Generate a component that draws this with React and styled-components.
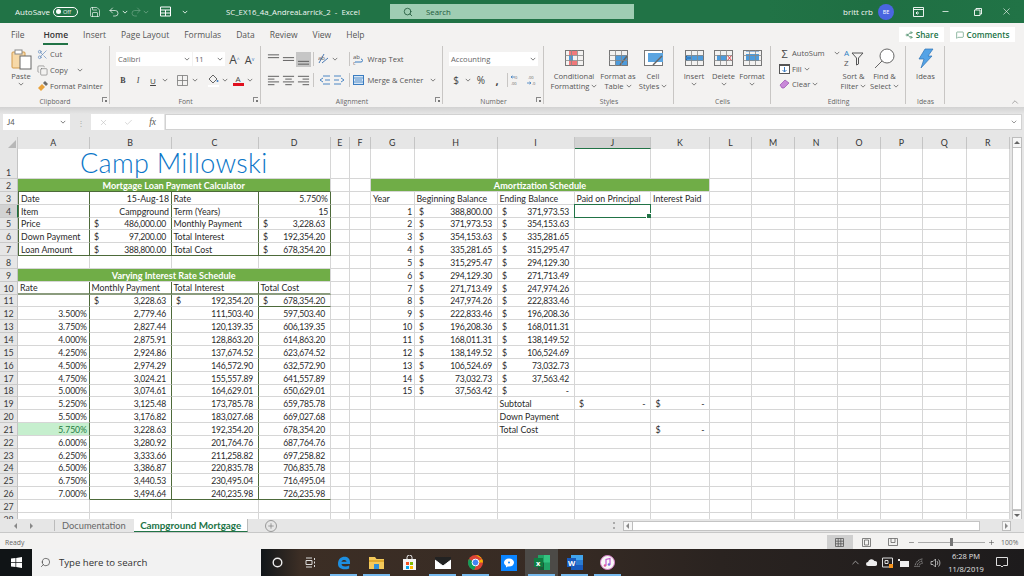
import React from 'react';
import styled, { createGlobalStyle } from 'styled-components';
import { Save, Undo2, Redo2, Search, Scissors, Copy, ChevronDown, ChevronUp, Share2, MessageSquare, X, Check, Plus, Minus } from 'lucide-react';

const Global = createGlobalStyle`
  html, body { margin: 0; padding: 0; background: #e6e6e6; }
  * { box-sizing: border-box; }
  #root { width: 1024px; height: 576px; overflow: hidden; }
`;

const UI = `"Open Sans", "Noto Sans", sans-serif`;
const Window = styled.div`
  width: 1024px; height: 576px; overflow: hidden; display: flex; flex-direction: column;
  font-family: ${UI}; background: #e6e6e6; color: #444;
`;

/* ---------- title bar ---------- */
const TitleBar = styled.div`
  height: 23px; flex: none; background: linear-gradient(90deg, #217346 0 75%, #1f6f43 85%, #217346); color: #f1f7f3;
  display: flex; align-items: center; font-size: 8px; position: relative;
`;
const AutoSave = styled.span` margin-left: 15px; width: 38px; `;
const Toggle = styled.span`
  width: 25px; height: 10px; border: 1px solid #fff; border-radius: 6px; display: flex; align-items: center;
  padding-left: 2px; gap: 2px; font-size: 5.6px; margin-right: 10px;
  &::before { content: ''; width: 5px; height: 5px; border-radius: 50%; background: #fff; }
`;
const QuickIcon = styled.span`
  display: flex; align-items: center; justify-content: center; width: ${p => p.$w || 12}px; margin-right: ${p => p.$mr || 0}px;
  opacity: ${p => p.$dim ? 0.35 : 1};
`;
const DocTitle = styled.span` margin-left: 36px; width: 164px; white-space: nowrap; font-size: 7.8px; `;
const SearchBox = styled.div`
  width: 244px; height: 15px; background: #9fcdb3; color: #21593b; display: flex; align-items: center;
  padding-left: 13px; gap: 13px; font-size: 7.8px;
`;
const UserName = styled.span` margin-left: 209px; width: 35px; white-space: nowrap; font-size: 8px; `;
const Avatar = styled.span`
  width: 16px; height: 16px; border-radius: 50%; background: #4a66e0; color: #fff; font-size: 5.5px;
  display: flex; align-items: center; justify-content: center; margin-right: 18px;
`;
const WinBtn = styled.span` width: ${p => p.$w}px; margin-right: ${p => p.$mr || 0}px; display: flex; justify-content: center; align-items: center; `;

/* ---------- tab row ---------- */
const TabRow = styled.div`
  height: 23px; flex: none; background: #f3f2f1; display: flex; align-items: center; padding-left: 11px;
  gap: 15px; font-size: 8.5px; color: #555;
`;
const MenuTab = styled.span`
  height: 23px; display: flex; align-items: center; position: relative; white-space: nowrap; margin-right: ${p => p.$mr || 0}px;
  ${p => p.$active && `color: #333; font-weight: 600;
    &::after { content: ''; position: absolute; left: 0; right: 0; bottom: 1px; height: 2px; background: #217346; }`}
`;
const TabActions = styled.div` margin-left: auto; display: flex; gap: 6px; margin-right: 9px; `;
const ActionBtn = styled.span`
  height: 15px; width: ${p => p.$w}px; background: #fff; color: #217346; font-weight: 600; font-size: 8.2px;
  display: flex; align-items: center; justify-content: center; gap: 3px;
`;

/* ---------- ribbon ---------- */
const Ribbon = styled.div`
  height: 61px; flex: none; background: #f3f2f1; display: flex; position: relative; font-size: 7.6px; color: #555;
`;
const GroupBox = styled.div`
  width: ${p => p.$w}px; flex: none; display: flex; flex-direction: column; position: relative;
  &::after { content: ''; position: absolute; right: 0; top: 0; bottom: 3px; width: 1px; background: #c8c6c4; }
`;
const GroupBody = styled.div` height: 49px; flex: none; display: flex; padding-left: ${p => p.$pl || 0}px; `;
const GroupLabel = styled.div` text-align: center; font-size: 6.8px; color: #666; line-height: 10px; padding-top: 2px; `;
const Launcher = styled.span`
  position: absolute; right: 3px; bottom: 5px; width: 5px; height: 5px; border-left: 1px solid #888; border-top: 1px solid #888;
  &::after { content: ''; position: absolute; right: 0; bottom: 0; width: 2px; height: 2px; background: #777; }
`;
const PasteCol = styled.div`
  width: 32px; margin-left: 5px; display: flex; flex-direction: column; align-items: center; padding-top: 3px; font-size: 7.6px; line-height: 10px;
`;
const PasteLabel = styled.span` margin-top: 1px; `;
const SmallCol = styled.div`
  width: ${p => p.$w ? p.$w + 'px' : 'auto'}; display: flex; flex-direction: column; padding-top: ${p => p.$pt ?? 1}px; gap: ${p => p.$gap ?? 2}px; white-space: nowrap;
`;
const SmallItem = styled.div` height: 14px; display: flex; align-items: center; gap: 2px; `;
const RowStack = styled.div` display: flex; flex-direction: column; padding-top: 6px; gap: 7px; `;
const ToolRow = styled.div` height: 14px; display: flex; align-items: center; `;
const Combo = styled.div`
  width: ${p => p.$w}px; height: 14px; background: #fff; display: flex; align-items: center; justify-content: space-between;
  padding: 0 2px; font-size: 7.6px; color: #666; margin-right: ${p => p.$mr || 0}px;
`;
const Tool = styled.span`
  width: ${p => p.$w || 14}px; height: 15px; flex: none; display: flex; align-items: center; justify-content: center;
  margin-left: ${p => p.$ml || 0}px; flex-direction: ${p => p.$stack ? 'column' : 'row'}; line-height: ${p => p.$stack ? '9px' : 'normal'};
  font-size: ${p => p.$fs || 8}px; color: #444; font-weight: ${p => p.$bold ? 700 : 400};
  font-style: ${p => p.$it ? 'italic' : 'normal'}; text-decoration: ${p => p.$u ? 'underline' : 'none'};
  background: ${p => p.$on ? '#c6c6c6' : 'transparent'}; font-family: ${p => p.$serif ? '"Liberation Serif", serif' : 'inherit'};
`;
const UpTick = styled.sup` font-size: 5px; color: #3a7cc0; `;
const ColorBar = styled.span` width: 11px; height: 2.5px; background: #e0101e; `;
const ToolText = styled.span`
  font-size: 7.6px; white-space: nowrap; margin-left: ${p => p.$ml || 0}px; width: ${p => p.$w ? p.$w + 'px' : 'auto'}; flex: none;
`;
const VSep = styled.span` width: 1px; height: 14px; background: #c8c6c4; flex: none; margin-left: ${p => p.$ml || 0}px; margin-right: ${p => p.$mr || 0}px; `;
const BigBtn = styled.div`
  width: ${p => p.$w}px; flex: none; display: flex; flex-direction: column; align-items: center; padding-top: 2px;
  text-align: center; line-height: 10.6px; font-size: 7.6px; white-space: nowrap;
`;
const BigIcon = styled.div` height: 20px; flex: none; display: flex; align-items: center; justify-content: center; margin-bottom: 2.7px; `;
const Caret = styled.span` position: absolute; right: 4px; bottom: 0; color: #666; display: flex; `;
const ChevSvg = styled.svg` flex: none; margin-left: ${p => p.$ml || 0}px; `;

const Chev = ({ s = 6, c = '#666', ml = 0 }) => (
  <ChevSvg $ml={ml} width={s} height={s} viewBox="0 0 8 8"><path d="M1 2.5 4 5.5 7 2.5" fill="none" stroke={c} strokeWidth="1.1" /></ChevSvg>
);
const Lines = ({ kind }) => {
  const rows = {
    left: [[1, 13], [1, 8], [1, 13], [1, 8]],
    center: [[1, 13], [3.500, 10.500], [1, 13], [3.500, 10.500]],
    right: [[1, 13], [6, 13], [1, 13], [6, 13]],
    top: [[1, 13], [1, 13]],
    mid: [[1, 13], [1, 13]],
    bot: [[1, 13], [1, 13]],
  }[kind];
  const y0 = { top: 2, mid: 5, bot: 9 }[kind] ?? 2.5;
  return (
    <svg width="13" height="13" viewBox="0 0 14 14">
      {rows.map(([a, b], i) => <line key={i} x1={a} x2={b} y1={y0 + i * 3} y2={y0 + i * 3} stroke="#555" strokeWidth="1" />)}
    </svg>
  );
};
const GridIcon = ({ children }) => (
  <svg width="19" height="16" viewBox="0 0 19 16">
    {children}
    <rect x=".5" y=".5" width="18" height="15" fill="none" stroke="#777" />
    {[6.5, 12.5].map(x => <line key={x} x1={x} x2={x} y1="0" y2="16" stroke="#888" strokeWidth=".8" />)}
    {[5.5, 10.5].map(y => <line key={y} y1={y} y2={y} x1="0" x2="19" stroke="#888" strokeWidth=".8" />)}
  </svg>
);

const Clipboard = () => (
  <GroupBox $w={110}>
    <GroupBody>
      <PasteCol>
        <svg width="21" height="21" viewBox="0 0 21 21">
          <rect x="1" y="3" width="13" height="16" rx="1" fill="#f7d9a8" stroke="#d39a4a" />
          <rect x="4" y="1" width="7" height="4" fill="#fff" stroke="#888" />
          <rect x="9" y="7" width="11" height="13" fill="#fff" stroke="#666" />
        </svg>
        <PasteLabel>Paste</PasteLabel>
        <Chev />
      </PasteCol>
      <SmallCol>
        <SmallItem><Scissors size={11} color="#4a7ab5" strokeWidth={1.3} /><span>Cut</span></SmallItem>
        <SmallItem><Copy size={11} color="#666" strokeWidth={1.2} /><span>Copy</span><Chev ml={7} /></SmallItem>
        <SmallItem>
          <svg width="11" height="11" viewBox="0 0 11 11"><path d="M1 7 5 3 8 6 4 10Z" fill="#e9a23b" /><path d="M6 2 8 0 11 3 9 5Z" fill="#6b6b6b" /></svg>
          <span>Format Painter</span>
        </SmallItem>
      </SmallCol>
    </GroupBody>
    <GroupLabel>Clipboard</GroupLabel>
    <Launcher />
  </GroupBox>
);

const Font = () => (
  <GroupBox $w={151}>
    <GroupBody $pl={6}>
      <RowStack>
        <ToolRow>
          <Combo $w={76} $mr={1}>Calibri <Chev /></Combo>
          <Combo $w={32} $mr={2}>11 <Chev /></Combo>
          <Tool $w={15} $fs={12}>A<UpTick>^</UpTick></Tool>
          <Tool $w={15} $fs={11}>A<UpTick>v</UpTick></Tool>
        </ToolRow>
        <ToolRow>
          <Tool $w={14} $bold $serif>B</Tool>
          <Tool $w={16} $it $serif>I</Tool>
          <Tool $w={14} $u>U</Tool>
          <Chev ml={2} />
          <Tool $w={11} $ml={9}><svg width="11" height="11" viewBox="0 0 11 11"><path d="M.5.5h10v10H.5ZM5.500.5v10M.5 5.500h10" fill="none" stroke="#777" strokeWidth=".8" /></svg></Tool>
          <Chev ml={4} />
          <Tool $w={14} $ml={8}><svg width="11" height="13" viewBox="0 0 11 13"><path d="M5 1 9 5 5 9 1 5Z" fill="none" stroke="#666" /><circle cx="9.5" cy="7" r="1" fill="#3a7cc0" /><rect x="0" y="11" width="11" height="2" fill="#fff" /></svg></Tool>
          <Chev ml={2} />
          <Tool $w={14} $ml={3} $stack>A<ColorBar /></Tool>
          <Chev ml={2} />
        </ToolRow>
      </RowStack>
    </GroupBody>
    <GroupLabel>Font</GroupLabel>
    <Launcher />
  </GroupBox>
);

const Alignment = () => (
  <GroupBox $w={182}>
    <GroupBody $pl={4.5}>
      <RowStack>
        <ToolRow>
          <Tool $w={15}><Lines kind="top" /></Tool>
          <Tool $w={15}><Lines kind="mid" /></Tool>
          <Tool $w={15} $on><Lines kind="bot" /></Tool>
          <VSep $ml={2} $mr={3} />
          <Tool $w={15}><svg width="12" height="12" viewBox="0 0 12 12"><path d="M1 10 6 1M4 10 10 5" stroke="#4a7ab5" fill="none" /><text x="0" y="7" fontSize="6" fill="#666">ab</text></svg></Tool>
          <Chev />
          <VSep $ml={11} />
          <Tool $w={14} $ml={2}><svg width="11" height="12" viewBox="0 0 11 12"><text x="0" y="5.5" fontSize="6" fill="#555">ab</text><path d="M2 9h6a1.5 1.5 0 0 0 0-3" stroke="#3a7cc0" fill="none" /><text x="0" y="12" fontSize="5" fill="#555">c</text></svg></Tool>
          <ToolText $ml={2}>Wrap Text</ToolText>
        </ToolRow>
        <ToolRow>
          <Tool $w={15}><Lines kind="left" /></Tool>
          <Tool $w={15}><Lines kind="center" /></Tool>
          <Tool $w={15}><Lines kind="right" /></Tool>
          <VSep $ml={2} $mr={3} />
          <Tool $w={15}><svg width="11" height="10" viewBox="0 0 11 10"><path d="M4 1h7M4 9h7M6 5h5M4 3 1 5 4 7" stroke="#3a7cc0" fill="none" strokeWidth=".9" /></svg></Tool>
          <Tool $w={15}><svg width="11" height="10" viewBox="0 0 11 10"><path d="M0 1h7M0 9h7M0 5h5M7 3 10 5 7 7" stroke="#3a7cc0" fill="none" strokeWidth=".9" /></svg></Tool>
          <VSep $ml={2} />
          <Tool $w={14} $ml={2}><svg width="11" height="10" viewBox="0 0 11 10"><rect x=".5" y=".5" width="10" height="9" fill="#d6e6f5" stroke="#3a7cc0" /><path d="M2 5h7M.5 3h10M.5 7h10" stroke="#3a7cc0" strokeWidth=".8" /></svg></Tool>
          <ToolText $ml={2} $w={62}>Merge &amp; Center</ToolText>
          <Chev />
        </ToolRow>
      </RowStack>
    </GroupBody>
    <GroupLabel>Alignment</GroupLabel>
    <Launcher />
  </GroupBox>
);

const NumberGroup = () => (
  <GroupBox $w={101}>
    <GroupBody $pl={6}>
      <RowStack>
        <ToolRow><Combo $w={89}>Accounting <Chev /></Combo></ToolRow>
        <ToolRow>
          <Tool $w={14} $fs={10}>$</Tool>
          <Chev ml={2} />
          <Tool $w={14} $ml={3} $fs={10}>%</Tool>
          <Tool $w={14} $ml={2} $fs={11} $bold>,</Tool>
          <VSep $ml={3} />
          <Tool $w={15}><svg width="11" height="10" viewBox="0 0 11 10"><path d="M5 2H1M2.500.8 1 2l1.500 1.2" stroke="#3a7cc0" fill="none" strokeWidth=".8" /><text x="4" y="4" fontSize="4" fill="#666">.0</text><text x="1" y="9.5" fontSize="4" fill="#666">.00</text></svg></Tool>
          <Tool $w={15} $ml={1}><svg width="11" height="10" viewBox="0 0 11 10"><path d="M1 8h4M3.500 6.800 5 8 3.500 9.200" stroke="#3a7cc0" fill="none" strokeWidth=".8" /><text x="2" y="4" fontSize="4" fill="#666">.00</text><text x="6" y="9.5" fontSize="4" fill="#666">.0</text></svg></Tool>
        </ToolRow>
      </RowStack>
    </GroupBody>
    <GroupLabel>Number</GroupLabel>
    <Launcher />
  </GroupBox>
);

const Styles = () => (
  <GroupBox $w={130}>
    <GroupBody $pl={7}>
      <BigBtn $w={46}>
        <BigIcon><GridIcon><rect x="4" y="0" width="8" height="5" fill="#f0787a" /><rect x="4" y="11" width="8" height="5" fill="#f0787a" /><rect x="4" y="5" width="4" height="6" fill="#4d9bdc" /></GridIcon></BigIcon>
        Conditional<span>Formatting <Chev /></span>
      </BigBtn>
      <BigBtn $w={42}>
        <BigIcon><GridIcon><rect x="6" y="5" width="13" height="11" fill="#4d9bdc" /><path d="M11 15 18 6" stroke="#666" strokeWidth="1.5" /></GridIcon></BigIcon>
        Format as<span>Table <Chev /></span>
      </BigBtn>
      <BigBtn $w={28}>
        <BigIcon><svg width="19" height="16" viewBox="0 0 19 16"><rect x=".5" y=".5" width="18" height="15" fill="#fff" stroke="#777" /><rect x="4" y="3" width="15" height="9" fill="#5aa4e0" /><path d="M9 15 18 6" stroke="#666" strokeWidth="1.5" /></svg></BigIcon>
        Cell<span>Styles <Chev /></span>
      </BigBtn>
    </GroupBody>
    <GroupLabel>Styles</GroupLabel>
  </GroupBox>
);

const CellsGroup = () => (
  <GroupBox $w={97}>
    <GroupBody $pl={5}>
      <BigBtn $w={30}>
        <BigIcon><GridIcon><rect x="0" y="5" width="19" height="6" fill="#4d9bdc" /><path d="M6 8H0M2.500 5.500 0 8l2.500 2.500" stroke="#1c66b0" fill="none" /></GridIcon></BigIcon>
        Insert<Chev />
      </BigBtn>
      <BigBtn $w={29}>
        <BigIcon><GridIcon><rect x="3" y="5" width="10" height="6" fill="#4d9bdc" /><path d="M13 5 18 11M18 5 13 11" stroke="#e0404a" /></GridIcon></BigIcon>
        Delete<Chev />
      </BigBtn>
      <BigBtn $w={28}>
        <BigIcon><GridIcon><rect x="3" y="4" width="13" height="7" fill="#4d9bdc" /><path d="M3 1h13" stroke="#3a7cc0" /></GridIcon></BigIcon>
        Format<Chev />
      </BigBtn>
    </GroupBody>
    <GroupLabel>Cells</GroupLabel>
  </GroupBox>
);

const Editing = () => (
  <GroupBox $w={135}>
    <GroupBody $pl={8}>
      <SmallCol $w={59} $pt={0} $gap={1.5}>
        <SmallItem><Tool $w={11} $fs={11}>Σ</Tool><ToolText $w={40}>AutoSum</ToolText><Chev /></SmallItem>
        <SmallItem><Tool $w={11}><svg width="11" height="10" viewBox="0 0 11 10"><rect x=".5" y=".5" width="10" height="9" fill="#fff" stroke="#555" /><rect x="0" y="0" width="11" height="2" fill="#555" /><path d="M5.500 3v5M3.500 6 5.500 8 7.500 6" stroke="#3a7cc0" fill="none" /></svg></Tool><ToolText>Fill</ToolText><Chev /></SmallItem>
        <SmallItem><Tool $w={11}><svg width="11" height="10" viewBox="0 0 11 10"><path d="M1 6 6 1 10 4 5 9H3Z" fill="#c888d8" stroke="#9a4fb0" strokeWidth=".7" /></svg></Tool><ToolText>Clear</ToolText><Chev /></SmallItem>
      </SmallCol>
      <BigBtn $w={31}>
        <BigIcon>
          <svg width="22" height="20" viewBox="0 0 22 20"><text x="1" y="8" fontSize="8" fill="#2f7fc4">A</text><text x="1" y="18" fontSize="8" fill="#555">Z</text><path d="M9 5h11l-4.500 5v6l-2 1v-7Z" fill="none" stroke="#555" /></svg>
        </BigIcon>
        Sort &amp;<span>Filter <Chev /></span>
      </BigBtn>
      <BigBtn $w={31}>
        <BigIcon>
          <svg width="22" height="21" viewBox="0 0 22 21"><circle cx="13" cy="8" r="7" fill="#fff" stroke="#666" /><path d="M8 13 1 20" stroke="#666" /></svg>
        </BigIcon>
        Find &amp;<span>Select <Chev /></span>
      </BigBtn>
    </GroupBody>
    <GroupLabel>Editing</GroupLabel>
  </GroupBox>
);

const Ideas = () => (
  <GroupBox $w={39}>
    <GroupBody>
      <BigBtn $w={39}>
        <BigIcon><svg width="16" height="21" viewBox="0 0 16 21"><path d="M7 1h8L10 8h4L3 20 6 11H1Z" fill="#54a3e6" stroke="#2f74b5" strokeWidth=".7" /></svg></BigIcon>
        Ideas
      </BigBtn>
    </GroupBody>
    <GroupLabel>Ideas</GroupLabel>
  </GroupBox>
);

/* ---------- formula bar ---------- */
const RibbonShade = styled.div` height: 7px; flex: none; background: linear-gradient(#d2d2d2, #e6e6e6); `;
const FormulaBar = styled.div` height: 16px; flex: none; display: flex; align-items: stretch; padding-left: 3px; `;
const NameBox = styled.div`
  width: 67px; background: #fff; display: flex; align-items: center; justify-content: space-between; padding: 0 4px;
  font-size: 7.6px; color: #555; font-family: "Lato", sans-serif;
`;
const Grip = styled.div` width: 21px; color: #aaa; display: flex; align-items: center; justify-content: center; font-size: 8px; `;
const FxBox = styled.div` width: 73px; background: #fff; display: flex; align-items: center; justify-content: space-between; padding: 0 8px; margin-right: 1px; `;
const Fx = styled.span` font-family: "Liberation Serif", serif; font-style: italic; font-size: 9.5px; color: #555; `;
const FormulaInput = styled.div`
  width: 857px; background: #fff; border: 1px solid #d2d2d2; display: flex; align-items: center; justify-content: flex-end; padding-right: 3px;
`;
const BarGap = styled.div` height: 7px; flex: none; `;

/* ---------- sheet ---------- */
const SheetArea = styled.div` height: 382px; flex: none; display: flex; overflow: hidden; `;
const CELL = `"Lato", "Carlito", sans-serif`;
const COLS = [['A', 71.5], ['B', 82], ['C', 87], ['D', 72], ['E', 19.5], ['F', 21], ['G', 43.5], ['H', 83], ['I', 77], ['J', 76.5], ['K', 59], ['L', 42], ['M', 43], ['N', 43], ['O', 43], ['P', 42], ['Q', 43.5], ['R', 43.5]];
const Grid = styled.div`
  width: 1010px; flex: none; display: grid; background: #fff;
  grid-template-columns: 18px ${COLS.map(c => c[1] + 'px').join(' ')};
  grid-template-rows: 12px 30px repeat(27, 12.85px);
  font-family: ${CELL}; font-size: 8.8px; color: #2a2a2a;
`;
const Corner = styled.div`
  background: #e6e6e6; border-right: 1px solid #c8c8c8; position: relative;
  &::after { content: ''; position: absolute; right: 1px; bottom: 1px; border-style: solid; border-width: 0 0 8px 8px; border-color: transparent transparent #b7b7b7 transparent; }
`;
const ColHead = styled.div`
  background: ${p => p.$on ? '#d2d2d2' : '#e6e6e6'}; border-right: 1px solid #c4c4c4; color: #333;
  display: flex; align-items: center; justify-content: center; font-size: 8.8px; line-height: 12px;
  border-bottom: ${p => p.$on ? '1px solid #217346' : 'none'};
`;
const RowHead = styled.div`
  background: ${p => p.$on ? '#d2d2d2' : '#e6e6e6'}; color: #3a3a3a; border-bottom: 1px solid #c9c9c9;
  border-right: 1px solid ${p => p.$on ? '#217346' : '#c4c4c4'};
  display: flex; align-items: flex-end; justify-content: center; font-size: 8.8px; line-height: 10px;
`;
const Cell = styled.div`
  grid-column: span ${p => p.$span || 1}; display: flex; align-items: flex-end; white-space: nowrap; position: relative;
  line-height: 10px; min-width: 0;
  justify-content: ${p => p.$a === 'r' ? 'flex-end' : p.$a === 'c' ? 'center' : p.$a === 'acc' ? 'space-between' : 'flex-start'};
  padding: ${p => p.$a === 'acc' ? '0 4.5px' : p.$a === 'r' ? '0 1.5px 0 0' : p.$a === 'l' ? '0 0 0 2px' : '0'};
  border-right: 1px solid ${p => p.$right ? '#4d6a3a' : '#d6d6d6'};
  border-bottom: ${p => p.$bottom === 'mid' ? '2px solid #8b9c7e' : p.$bottom ? '1px solid #4d6a3a' : '1px solid #d6d6d6'};
  border-left: ${p => p.$left ? '1px solid #4d6a3a' : 'none'};
  background: ${p => p.$bg || 'transparent'};
  color: ${p => p.$fg || 'inherit'};
  font-weight: ${p => p.$bold ? 700 : 400};
  font-size: ${p => p.$bold ? '9.1px' : 'inherit'};
`;
const TitleText = styled.span`
  font-family: "Lato", sans-serif; font-weight: 300; font-size: 27px; line-height: 30px; color: #0b76c8; letter-spacing: .3px;
`;
const Selection = styled.span`
  position: absolute; inset: -1px; border: 1.5px solid #217346; pointer-events: none;
  &::after { content: ''; position: absolute; right: -2px; bottom: -2px; width: 4px; height: 4px; background: #217346; border: .5px solid #fff; }
`;
const VScroll = styled.div` width: 14px; flex: none; background: #e6e6e6; display: flex; flex-direction: column; padding: 0 2px; align-items: stretch; `;
const ScrollBtn = styled.div`
  height: 11px; flex: none; background: #f6f6f6; border: 1px solid #bdbdbd; display: flex; align-items: center; justify-content: center; color: #555;
`;
const Thumb = styled.div` height: 362px; flex: none; background: #fff; border: 1px solid #c4c4c4; border-top: none; `;
const Tri = styled.span`
  width: 0; height: 0; border-style: solid;
  border-width: ${p => ({ u: '0 3px 3px 3px', d: '3px 3px 0 3px', l: '3px 3px 3px 0', r: '3px 0 3px 3px' }[p.$d])};
  border-color: ${p => ({ u: 'transparent transparent #666 transparent', d: '#666 transparent transparent transparent', l: 'transparent #888 transparent transparent', r: 'transparent transparent transparent #888' }[p.$d])};
`;

const L = t => ({ t, a: 'l' });
const R = t => ({ t, a: 'r' });
const A = t => ({ t, a: 'acc' });

const rates = [
  ['3.500%', '2,779.46', '111,503.40', '597,503.40'], ['3.750%', '2,827.44', '120,139.35', '606,139.35'],
  ['4.000%', '2,875.91', '128,863.20', '614,863.20'], ['4.250%', '2,924.86', '137,674.52', '623,674.52'],
  ['4.500%', '2,974.29', '146,572.90', '632,572.90'], ['4.750%', '3,024.21', '155,557.89', '641,557.89'],
  ['5.000%', '3,074.61', '164,629.01', '650,629.01'], ['5.250%', '3,125.48', '173,785.78', '659,785.78'],
  ['5.500%', '3,176.82', '183,027.68', '669,027.68'], ['5.750%', '3,228.63', '192,354.20', '678,354.20'],
  ['6.000%', '3,280.92', '201,764.76', '687,764.76'], ['6.250%', '3,333.66', '211,258.82', '697,258.82'],
  ['6.500%', '3,386.87', '220,835.78', '706,835.78'], ['6.750%', '3,440.53', '230,495.04', '716,495.04'],
  ['7.000%', '3,494.64', '240,235.98', '726,235.98'],
];
const amort = [
  ['388,800.00', '371,973.53'], ['371,973.53', '354,153.63'], ['354,153.63', '335,281.65'], ['335,281.65', '315,295.47'],
  ['315,295.47', '294,129.30'], ['294,129.30', '271,713.49'], ['271,713.49', '247,974.26'], ['247,974.26', '222,833.46'],
  ['222,833.46', '196,208.36'], ['196,208.36', '168,011.31'], ['168,011.31', '138,149.52'], ['138,149.52', '106,524.69'],
  ['106,524.69', '73,032.73'], ['73,032.73', '37,563.42'], ['37,563.42', '-'],
];

const DATA = {
  1: { A: { span: 4, title: 'Camp Millowski', a: 'c' } },
  2: { A: { span: 4, t: 'Mortgage Loan Payment Calculator', a: 'c', band: true }, G: { span: 5, t: 'Amortization Schedule', a: 'c', band: true } },
  3: { A: L('Date'), B: R('15-Aug-18'), C: L('Rate'), D: R('5.750%'), G: L('Year'), H: L('Beginning Balance'), I: L('Ending Balance'), J: L('Paid on Principal'), K: L('Interest Paid') },
  4: { A: L('Item'), B: R('Campground'), C: L('Term (Years)'), D: R('15') },
  5: { A: L('Price'), B: A('486,000.00'), C: L('Monthly Payment'), D: A('3,228.63') },
  6: { A: L('Down Payment'), B: A('97,200.00'), C: L('Total Interest'), D: A('192,354.20') },
  7: { A: L('Loan Amount'), B: A('388,800.00'), C: L('Total Cost'), D: A('678,354.20') },
  9: { A: { span: 4, t: 'Varying Interest Rate Schedule', a: 'c', band: true } },
  10: { A: L('Rate'), B: L('Monthly Payment'), C: L('Total Interest'), D: L('Total Cost') },
  11: { B: A('3,228.63'), C: A('192,354.20'), D: A('678,354.20') },
};
rates.forEach((r, i) => {
  const row = 12 + i;
  DATA[row] = { A: R(r[0]), B: { t: r[1], a: 'r', pad: true }, C: { t: r[2], a: 'r', pad: true }, D: { t: r[3], a: 'r', pad: true } };
});
DATA[21].A.bg = '#c6efce';
DATA[21].A.fg = '#1f7a42';
amort.forEach((r, i) => {
  const row = 4 + i;
  DATA[row] = { ...DATA[row], G: R(String(i + 1)), H: A(r[0]), I: A(r[1]) };
});
DATA[19] = { ...DATA[19], I: L('Subtotal'), J: A('-'), K: A('-') };
DATA[20] = { ...DATA[20], I: L('Down Payment') };
DATA[21] = { ...DATA[21], I: L('Total Cost'), K: A('-') };

const rightDark = (c, r) =>
  (r >= 3 && r <= 7 && 'ABCD'.includes(c)) || (r >= 10 && r <= 26 && 'ABC'.includes(c));
const bottomDark = (c, r) => {
  if (!'ABCD'.includes(c)) return false;
  if (r === 2 || r === 7) return true;
  if (r === 10) return 'mid';
  if (r === 11 && c === 'D') return true;
  if (r === 26 && 'BCD'.includes(c)) return true;
  return false;
};

const Money = styled.span`
  padding-right: ${p => p.$pad ? 3 : 0}px;
  font-size: ${p => p.$kind ? '8.6px' : 'inherit'};
  letter-spacing: ${p => p.$kind === 'num' ? '-0.2px' : '0'};
`;
const kindOf = t => (/^[\d,.]+$/.test(t) ? 'num' : /%$/.test(t) ? 'pct' : '');

function renderRow(r) {
  const out = [<RowHead key={'h' + r} $on={r === 4}>{r}</RowHead>];
  let skip = 0;
  for (const [c] of COLS) {
    if (skip > 0) { skip--; continue; }
    const d = (DATA[r] && DATA[r][c]) || {};
    if (d.span) skip = d.span - 1;
    const lastCol = d.span ? 'D' : c;
    const isSel = c === 'J' && r === 4;
    out.push(
      <Cell
        key={c + r}
        $span={d.span}
        $a={d.a}
        $bg={d.band ? '#70ad47' : d.bg}
        $fg={d.band ? '#fff' : d.fg}
        $bold={d.band}
        $left={c === 'A' && r >= 3 && r <= 7}
        $right={!d.band && rightDark(lastCol, r)}
        $bottom={bottomDark(c, r)}
      >
        {d.title && <TitleText>{d.title}</TitleText>}
        {d.a === 'acc' && <span>$</span>}
        {d.t && <Money $pad={d.pad} $kind={kindOf(d.t)}>{d.t}</Money>}
        {isSel && <Selection />}
      </Cell>
    );
  }
  return out;
}

/* ---------- sheet tabs ---------- */
const TabsBar = styled.div`
  height: 14px; flex: none; background: #e6e6e6; display: flex; align-items: stretch; font-size: 9.3px;
  font-family: ${CELL}; color: #666; border-bottom: 1px solid #c8c8c8;
`;
const NavArrows = styled.div` width: 55px; display: flex; align-items: center; gap: 13px; padding-left: 14px; border-right: 1px solid #bbb; margin: 1px 0; `;
const SheetTab = styled.div`
  display: flex; align-items: center; white-space: nowrap; justify-content: center; flex: none;
  ${p => p.$active
    ? 'width: 114px; margin-left: 1.5px; background: #fff; color: #217346; font-weight: 700; font-size: 9.8px; border-bottom: 1.5px solid #217346; border-right: 1px solid #bbb;'
    : 'padding: 0 7px;'}
`;
const AddSheet = styled.div`
  width: 12px; height: 12px; flex: none; border: 1px solid #999; border-radius: 50%; margin: 1px 0 0 17px; display: flex; align-items: center; justify-content: center;
`;
const HScrollWrap = styled.div` margin-left: 336px; display: flex; align-items: center; height: 13px; flex: none; `;
const HGrip = styled.span` width: 2px; height: 7px; margin-right: 8px; border-left: 2px dotted #aaa; `;
const HBtn = styled.span`
  width: 9.5px; height: 10px; background: #f6f6f6; border: 1px solid #bdbdbd; display: flex; align-items: center; justify-content: center;
`;
const HThumb = styled.span` width: 347px; height: 10px; background: #fff; border: 1px solid #c4c4c4; border-left: none; `;
const HTrack = styled.span` width: 22px; height: 10px; `;
const TabsGap = styled.div` height: 2px; flex: none; background: #f3f2f1; `;

/* ---------- status bar ---------- */
const StatusBar = styled.div`
  height: 14px; flex: none; background: #f3f2f1; display: flex; align-items: center; font-size: 6.8px; color: #666; padding-left: 5px;
`;
const ReadyText = styled.span` width: 821.5px; flex: none; `;
const ViewBtn = styled.span`
  width: 26.5px; height: 14px; display: flex; align-items: center; justify-content: center; background: ${p => p.$on ? '#cfcfcf' : 'transparent'};
`;
const ZoomMark = styled.span` display: flex; width: 7px; margin-left: 2px; `;
const Slider = styled.span`
  width: 67px; height: 1px; background: #aaa; margin: 0 3px 0 3px; position: relative; flex: none;
  &::after { content: ''; position: absolute; left: 32px; top: -3.5px; width: 3px; height: 8px; background: #777; }
`;
const ZoomPct = styled.span` margin-left: 6px; `;

/* ---------- taskbar ---------- */
const Taskbar = styled.div`
  height: 27px; flex: none; display: flex; align-items: stretch; position: relative; color: #eee;
  background: linear-gradient(90deg, #12171a 0, #12171a 262px, #3c2e25 300px, #372b24 560px, #2a2320 720px, #1d1b1c 1024px);
`;
const StartBtn = styled.div` width: 32px; flex: none; display: flex; align-items: center; justify-content: center; background: #101416; `;
const TaskSearch = styled.div`
  width: 229px; flex: none; background: #f2f2f2; color: #333; display: flex; align-items: center; padding-left: 8px; gap: 8px; font-size: 9.6px;
  svg { transform: scaleX(-1); }
`;
const Slot = styled.div`
  width: 33px; flex: none; display: flex; align-items: center; justify-content: center; position: relative;
  background: ${p => p.$on ? '#4c4a47' : 'transparent'};
  ${p => p.$run && `&::after { content: ''; position: absolute; left: 3px; right: 3px; bottom: 0; height: 2px; background: #76b9ed; }`}
`;
const Tray = styled.div` margin-left: auto; display: flex; align-items: center; gap: 3px; padding-right: 15.5px; `;
const TrayIcon = styled.span` width: 13px; display: flex; justify-content: center; align-items: center; `;
const Clock = styled.div`
  width: 38px; margin: 0 7.5px 0 2.5px; text-align: center; font-size: 7.5px; line-height: 12.5px; color: #e4e4e4; white-space: nowrap;
  display: flex; flex-direction: column; align-items: center;
`;

export default function App() {
  return (
    <Window>
      <Global />
      <TitleBar>
        <AutoSave>AutoSave</AutoSave>
        <Toggle>Off</Toggle>
        <QuickIcon $w={13} $mr={7}><Save size={12} color="#fff" strokeWidth={1.3} /></QuickIcon>
        <QuickIcon $w={12}><Undo2 size={12} color="#fff" strokeWidth={1.4} /></QuickIcon>
        <QuickIcon $w={9}><Chev c="#fff" /></QuickIcon>
        <QuickIcon $w={13} $dim><Redo2 size={12} color="#fff" strokeWidth={1.4} /></QuickIcon>
        <QuickIcon $w={8} $dim><Chev c="#fff" /></QuickIcon>
        <QuickIcon $w={30}><svg width="11" height="11" viewBox="0 0 11 11"><path d="M.5 1h10v9H.5ZM.5 4h10M.5 7h10M5.500 4v6" fill="none" stroke="#fff" /></svg></QuickIcon>
        <QuickIcon $w={10}><Chev c="#fff" /></QuickIcon>
        <DocTitle>SC_EX16_4a_AndreaLarrick_2 &nbsp;-&nbsp; Excel</DocTitle>
        <SearchBox><Search size={10} color="#21593b" />Search</SearchBox>
        <UserName>britt crb</UserName>
        <Avatar>BE</Avatar>
        <WinBtn $w={13} $mr={12}><svg width="11" height="10" viewBox="0 0 11 10"><path d="M.5.5h10v9H.5ZM.5 2.500h10M3 6h3M4.500 4.500 3 6l1.500 1.500" fill="none" stroke="#fff" strokeWidth=".9" /></svg></WinBtn>
        <WinBtn $w={17} $mr={17}><Minus size={9} color="#fff" /></WinBtn>
        <WinBtn $w={13} $mr={15}><svg width="8" height="8" viewBox="0 0 8 8"><path d="M.5 2h5.500v5.500H.5ZM2 2V.5h5.500V6H6" fill="none" stroke="#fff" strokeWidth=".9" /></svg></WinBtn>
        <WinBtn $w={14}><X size={11} color="#fff" strokeWidth={1.3} /></WinBtn>
      </TitleBar>

      <TabRow>
        <MenuTab $mr={4}>File</MenuTab>
        <MenuTab $active>Home</MenuTab>
        <MenuTab>Insert</MenuTab>
        <MenuTab>Page Layout</MenuTab>
        <MenuTab>Formulas</MenuTab>
        <MenuTab>Data</MenuTab>
        <MenuTab>Review</MenuTab>
        <MenuTab>View</MenuTab>
        <MenuTab>Help</MenuTab>
        <TabActions>
          <ActionBtn $w={45}><Share2 size={8} strokeWidth={1.5} />Share</ActionBtn>
          <ActionBtn $w={65}><MessageSquare size={8} strokeWidth={1.5} />Comments</ActionBtn>
        </TabActions>
      </TabRow>

      <Ribbon>
        <Clipboard />
        <Font />
        <Alignment />
        <NumberGroup />
        <Styles />
        <CellsGroup />
        <Editing />
        <Ideas />
        <Caret><ChevronUp size={10} strokeWidth={1.3} /></Caret>
      </Ribbon>
      <RibbonShade />

      <FormulaBar>
        <NameBox>J4 <Chev /></NameBox>
        <Grip>⋮</Grip>
        <FxBox>
          <X size={9} color="#bbb" strokeWidth={1.5} />
          <Check size={9} color="#bbb" strokeWidth={1.5} />
          <Fx>fx</Fx>
        </FxBox>
        <FormulaInput><ChevronDown size={8} color="#666" /></FormulaInput>
      </FormulaBar>
      <BarGap />

      <SheetArea>
        <Grid>
          <Corner />
          {COLS.map(([c]) => <ColHead key={c} $on={c === 'J'}>{c}</ColHead>)}
          {Array.from({ length: 28 }, (_, i) => renderRow(i + 1))}
        </Grid>
        <VScroll>
          <ScrollBtn><Tri $d="u" /></ScrollBtn>
          <Thumb />
          <ScrollBtn><Tri $d="d" /></ScrollBtn>
        </VScroll>
      </SheetArea>

      <TabsBar>
        <NavArrows><Tri $d="l" /><Tri $d="r" /></NavArrows>
        <SheetTab>Documentation</SheetTab>
        <SheetTab $active>Campground Mortgage</SheetTab>
        <AddSheet><Plus size={8} color="#777" /></AddSheet>
        <HScrollWrap>
          <HGrip />
          <HBtn><Tri $d="l" /></HBtn>
          <HThumb />
          <HTrack />
          <HBtn><Tri $d="r" /></HBtn>
        </HScrollWrap>
      </TabsBar>
      <TabsGap />

      <StatusBar>
        <ReadyText>Ready</ReadyText>
        <ViewBtn $on><svg width="9" height="9" viewBox="0 0 9 9"><path d="M.5.5h8v8h-8ZM3.200.5v8M5.800.5v8M.5 3.200h8M.5 5.800h8" fill="none" stroke="#555" strokeWidth=".8" /></svg></ViewBtn>
        <ViewBtn><svg width="9" height="9" viewBox="0 0 9 9"><path d="M.5.5h8v8h-8ZM2.500 2h4v5h-4Z" fill="none" stroke="#666" strokeWidth=".8" /></svg></ViewBtn>
        <ViewBtn><svg width="10" height="8" viewBox="0 0 10 8"><path d="M.5.5h9v7h-9ZM3 .5v4h4v-4" fill="none" stroke="#666" strokeWidth=".8" /></svg></ViewBtn>
        <ZoomMark><Minus size={7} color="#555" /></ZoomMark>
        <Slider />
        <Plus size={7} color="#555" />
        <ZoomPct>100%</ZoomPct>
      </StatusBar>

      <Taskbar>
        <StartBtn><svg width="11" height="11" viewBox="0 0 11 11"><path d="M0 1.600 4.500 1v4.200H0ZM5.200.9 11 0v5.200H5.200ZM0 5.900h4.500V10L0 9.400ZM5.200 5.900H11V11l-5.800-.9Z" fill="#fff" /></svg></StartBtn>
        <TaskSearch><Search size={11} color="#333" strokeWidth={1.4} />Type here to search</TaskSearch>
        <Slot><svg width="11" height="11" viewBox="0 0 11 11"><circle cx="5.500" cy="5.500" r="4.300" fill="none" stroke="#eee" strokeWidth="1.4" /></svg></Slot>
        <Slot><svg width="11" height="11" viewBox="0 0 11 11"><path d="M1 1h6M1 10h6M1 3.500h6v4H1ZM9.500 1v2M9.500 4.500v2M9.500 8v2" fill="none" stroke="#ddd" /></svg></Slot>
        <Slot $run><svg width="14" height="14" viewBox="0 0 14 14"><path d="M1 8C1 3 4 .8 7.500.8 11 .8 13.500 3 13 8H4.500c.3 2.800 4.500 3.300 7.700 1.400v3C8 14.200 1 13.500 1 8Zm3.500-2.300h5C9.400 3.600 5 3.500 4.500 5.700Z" fill="#1e8fe0" /></svg></Slot>
        <Slot $run><svg width="15" height="13" viewBox="0 0 15 13"><path d="M0 1h6l1.500 2H15v10H0Z" fill="#f4c95a" /><rect x="0" y="4" width="15" height="2" fill="#e0a92d" /><rect x="5" y="8" width="5" height="5" fill="#2f8fd8" /></svg></Slot>
        <Slot><svg width="15" height="15" viewBox="0 0 15 15"><path d="M5 4V2.500a2.500 2.500 0 0 1 5 0V4" fill="none" stroke="#eee" /><rect x="1" y="4" width="13" height="11" fill="#f5f5f5" /><rect x="4" y="7" width="3" height="3" fill="#f25022" /><rect x="8" y="7" width="3" height="3" fill="#7fba00" /><rect x="4" y="11" width="3" height="3" fill="#00a4ef" /><rect x="8" y="11" width="3" height="3" fill="#ffb900" /></svg></Slot>
        <Slot $run><svg width="16" height="12" viewBox="0 0 16 12"><path d="M0 0h16v12H0Z" fill="#fff" /><path d="M0 3 8 9 16 3V0H0Z" fill="#222" /><path d="M0 3 8 9 16 3" fill="none" stroke="#fff" /></svg></Slot>
        <Slot $run><svg width="15" height="15" viewBox="0 0 15 15"><circle cx="7.500" cy="7.500" r="7.500" fill="#db4437" /><path d="M1 4A7.500 7.500 0 0 0 6 15L9 9Z" fill="#0f9d58" /><path d="M7.500 0A7.500 7.500 0 0 1 15 7.500H7.500L14 4Z" fill="#f4b400" /><circle cx="7.500" cy="7.500" r="3.400" fill="#4285f4" stroke="#fff" /></svg></Slot>
        <Slot><svg width="16" height="16" viewBox="0 0 16 16"><rect width="16" height="16" fill="#0a84ff" /><path d="M8 3.500c-3 0-5 1.800-5 4 0 1.400.8 2.500 2 3.200v1.800l1.700-1c.4.1.8.1 1.300.1 3 0 5-1.800 5-4.100s-2-4-5-4Z" fill="#fff" /><circle cx="8" cy="7.500" r="1" fill="#0a84ff" /></svg></Slot>
        <Slot $on $run><svg width="16" height="15" viewBox="0 0 16 15"><rect x="4" y="0" width="12" height="15" fill="#21a366" /><rect x="10" y="0" width="6" height="7.500" fill="#33c481" /><rect x="4" y="7.500" width="6" height="7.500" fill="#185c37" /><rect x="0" y="3" width="9" height="9" fill="#107c41" /><text x="2" y="10.500" fontSize="7.500" fontWeight="700" fill="#fff">x</text></svg></Slot>
        <Slot $run><svg width="16" height="15" viewBox="0 0 16 15"><rect x="4" y="0" width="12" height="15" fill="#2b7cd3" /><rect x="4" y="0" width="12" height="5" fill="#41a5ee" /><rect x="4" y="10" width="12" height="5" fill="#185abd" /><rect x="0" y="3" width="9" height="9" fill="#185abd" /><text x="1" y="10.500" fontSize="7.500" fontWeight="700" fill="#fff">W</text></svg></Slot>
        <Slot $run><svg width="15" height="15" viewBox="0 0 15 15"><circle cx="7.500" cy="7.500" r="7" fill="#f7f7f7" stroke="#d87ec8" /><path d="M6 10.500V4.500l4-1v6" fill="none" stroke="#c458d0" strokeWidth="1.2" /><circle cx="5" cy="10.500" r="1.300" fill="#e05ba0" /><circle cx="9" cy="9.500" r="1.300" fill="#7a6ae0" /></svg></Slot>
        <Tray>
          <TrayIcon><ChevronUp size={11} color="#ddd" strokeWidth={1.4} /></TrayIcon>
          <TrayIcon><svg width="11" height="7" viewBox="0 0 11 7"><path d="M2 7a2 2 0 0 1 0-4 3.500 3.500 0 0 1 6.500-1A2.500 2.500 0 0 1 9 7Z" fill="#eee" /></svg></TrayIcon>
          <TrayIcon><svg width="11" height="11" viewBox="0 0 11 11"><path d="M.5 1h10v9H.5Z" fill="none" stroke="#ddd" /><path d="M3 3.500h3v3H3Z" fill="none" stroke="#ddd" /><rect x="7" y="7" width="4" height="4" fill="#f7941d" /></svg></TrayIcon>
          <TrayIcon><svg width="11" height="8" viewBox="0 0 11 8"><rect x="2" y="2" width="9" height="6" fill="#eee" /><rect x="0" y="0" width="2" height="2" fill="#eee" /></svg></TrayIcon>
          <TrayIcon><svg width="10" height="9" viewBox="0 0 10 9"><path d="M1 9a8 8 0 0 1 8-8M3 9a6 6 0 0 1 6-6M5 9a4 4 0 0 1 4-4" fill="none" stroke="#bbb" strokeDasharray="1 .8" /></svg></TrayIcon>
          <TrayIcon><svg width="11" height="10" viewBox="0 0 11 10"><path d="M1 3.500h2L5.500 1v8L3 6.500H1ZM7 3a3 3 0 0 1 0 4M8.500 1.500a5 5 0 0 1 0 7" fill="none" stroke="#ccc" strokeWidth=".8" /></svg></TrayIcon>
          <Clock><span>6:28 PM</span><span>11/8/2019</span></Clock>
          <TrayIcon><svg width="12" height="11" viewBox="0 0 12 11"><path d="M.5.5h11v8H7.500L6 10 4.500 8.500H.5Z" fill="none" stroke="#ddd" /></svg></TrayIcon>
        </Tray>
      </Taskbar>
    </Window>
  );
}
